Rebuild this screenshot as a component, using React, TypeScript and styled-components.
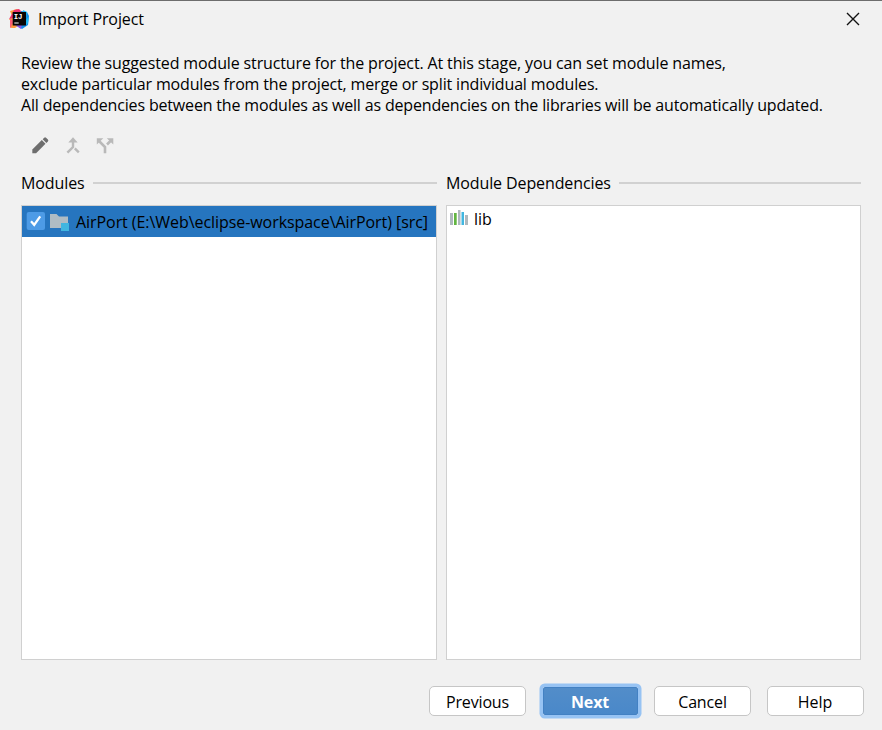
import React from "react";
import styled, { createGlobalStyle } from "styled-components";

const GlobalStyle = createGlobalStyle`
  * { box-sizing: border-box; }
  body { margin: 0; background: #f1f1f1; }
`;

const Dialog = styled.main`
  width: 882px;
  height: 730px;
  display: flex;
  flex-direction: column;
  border-top: 1px solid #6d6d6d;
  background: #f1f1f1;
  color: #000;
  font: 16px/21px "Open Sans", "Noto Sans", sans-serif;
  overflow: hidden;
`;

const TitleBar = styled.header`
  height: 36px;
  display: flex;
  align-items: center;
  padding: 0 22px 0 9px;
`;

const Label = styled.span<{ $tracking?: number }>`
  white-space: pre;
  letter-spacing: ${(p) => p.$tracking ?? 0}px;
`;

const Title = styled(Label)`
  flex: 1;
  margin: 1px 0 0 9px;
`;

const CloseButton = styled.button`
  display: flex;
  padding: 0;
  border: 0;
  background: none;
`;

const Description = styled.section`
  height: 63px;
  margin: 16px 21px 0;
  display: flex;
  flex-direction: column;
`;

const Toolbar = styled.div`
  display: flex;
  gap: 12px;
  margin: 19px 0 0 30px;
  height: 20px;
`;

const Panels = styled.div`
  display: grid;
  grid-template-columns: 416px 415px;
  gap: 9px;
  margin: 18px 0 0 21px;
`;

const Panel = styled.section`
  display: flex;
  flex-direction: column;
`;

const Heading = styled.h2`
  display: flex;
  align-items: center;
  gap: 8px;
  height: 21px;
  margin: 0 0 11px;
  font: inherit;
  &::after {
    content: "";
    flex: 1;
    height: 2px;
    margin-bottom: 2px;
    background: #d1d1d1;
  }
`;

const List = styled.div`
  height: 455px;
  border: 1px solid #d0d0d0;
  background: #fff;
`;

const ModuleRow = styled.div`
  height: 31px;
  display: flex;
  align-items: center;
  padding-left: 4px;
  background: #2675bf;
`;

const RowIcon = styled.span`
  display: flex;
  margin-bottom: 1px;
`;

const FolderSlot = styled(RowIcon)`
  margin: 0 0 0 3px;
`;

const ModuleName = styled(Label)`
  margin: 2px 0 0 7px;
`;

const LibraryRow = styled.div`
  height: 26px;
  display: flex;
  align-items: center;
  gap: 6px;
  padding-left: 3px;
`;

const LibraryGlyph = styled.span`
  display: flex;
  margin-bottom: 2px;
`;

const Footer = styled.footer`
  display: flex;
  align-items: center;
  justify-content: flex-end;
  gap: 15.5px;
  height: 36px;
  margin-top: 23px;
  padding: 0 18.5px 1px 0;
`;

const Button = styled.button`
  width: 97px;
  height: 30px;
  padding: 3px 0 0;
  border: 1px solid #c6c6c6;
  border-radius: 5px;
  background: #fff;
  color: #000;
  font: inherit;
`;

const PrimaryButton = styled(Button)`
  width: 95px;
  height: 28px;
  margin: 0 1px;
  border: 1px solid #4381c3;
  border-radius: 2px;
  background: linear-gradient(#528dc9, #4a88c9);
  box-shadow: 0 0 0 3.5px #97c3f3;
  color: #fff;
  font-weight: 700;
`;

function AppIcon() {
  return (
    <svg width="20" height="20" viewBox="0 0 20 20">
      <path d="M1 2 8 0l5 3-3 8H0l3-4z" fill="#fc9b3a" />
      <path d="M5 1 10 0l3 3-9 6-4 1 3-5z" fill="#ef326f" />
      <path d="m12 2 6 1 2 4-1 9-6 4-5-3z" fill="#148be8" />
      <path d="m14 1 4 2-1 8 3-4-1 7-3 3z" fill="#1bb8f3" />
      <path d="m1 10 7 3-3 4-4 2z" fill="#fe5c71" />
      <path d="m2 19 1-4 6 2-3 2z" fill="#ff9a3c" />
      <path d="m6 16 7-1-1 5z" fill="#8754e8" />
      <path fill="#090404" d="M3.7 3H17v13.5H3.7z" />
      <path d="M5.3 14h4.4" stroke="#fff" strokeWidth="1" />
      <text x="4.7" y="10" fill="#fff" fontFamily="Liberation Mono, monospace" fontSize="7.4" fontWeight="700">IJ</text>
    </svg>
  );
}

function CloseIcon() {
  return (
    <svg width="14" height="14" viewBox="0 0 14 14">
      <path d="m1 1 12 12M13 1 1 13" stroke="#111" strokeWidth="1.4" />
    </svg>
  );
}

function PencilIcon() {
  return (
    <svg width="20" height="20" viewBox="0 0 20 20">
      <path d="m2.3 14.5 9.5-9.4 3.7 3.7L6.1 18.2H2.3z" fill="#6e6e6e" />
      <path d="m12.7 4.2 1.5-1.5q.9-.9 1.8 0l1.9 1.9q.9.9 0 1.8l-1.5 1.5z" fill="#6e6e6e" />
    </svg>
  );
}

function MergeIcon() {
  return (
    <svg width="20" height="20" viewBox="0 0 20 20">
      <path d="M11 6v6l-5.6 5.6M12.8 13.4l4 4" fill="none" stroke="#b9b9b9" strokeWidth="2.4" />
      <path d="m11 2.3 4.7 5.2H6.3z" fill="#b9b9b9" />
    </svg>
  );
}

function SplitIcon() {
  return (
    <svg width="20" height="20" viewBox="0 0 20 20">
      <path d="M11 18.3V12L5 6M13 9.5l4-4" fill="none" stroke="#b9b9b9" strokeWidth="2.6" />
      <path d="M2.8 3.2h6.5l-6.5 6.3zM12.8 3.2h6.5v6.3z" fill="#b9b9b9" />
    </svg>
  );
}

function CheckIcon() {
  return (
    <svg width="20" height="20" viewBox="0 0 20 20">
      <rect x=".7" y="1" width="18.3" height="18" rx="2" fill="#4d9be6" />
      <path d="m5 10.3 3.2 3.5 6-8.5" fill="none" stroke="#fff" strokeWidth="2.3" />
    </svg>
  );
}

function ModuleIcon() {
  return (
    <svg width="20" height="20" viewBox="0 0 20 20">
      <path d="M1 2h6.5L10 4.5h9V11h-7v5H1z" fill="#afbcc4" />
      <path d="M12 11h8v8h-8z" fill="#40b6e0" />
    </svg>
  );
}

function LibraryIcon() {
  return (
    <svg width="18" height="16" viewBox="0 0 18 16">
      <path d="M0 3h3v12H0zM8 0h2.5v15H8zM15 5h3v10h-3z" fill="#afb8be" />
      <path d="M4 3h2.7v12H4z" fill="#62b543" />
      <path d="M11.5 2H14v13h-2.5z" fill="#40b6e0" />
    </svg>
  );
}

export default function App() {
  return (
    <Dialog>
      <GlobalStyle />
      <TitleBar>
        <AppIcon />
        <Title $tracking={-0.1}>Import Project</Title>
        <CloseButton aria-label="Close"><CloseIcon /></CloseButton>
      </TitleBar>
      <Description>
        <Label $tracking={-0.135}>Review the suggested module structure for the project. At this stage, you can set module names,</Label>
        <Label $tracking={-0.155}>exclude particular modules from the project, merge or split individual modules.</Label>
        <Label $tracking={-0.17}>All dependencies between the modules as well as dependencies on the libraries will be automatically updated.</Label>
      </Description>
      <Toolbar>
        <PencilIcon />
        <MergeIcon />
        <SplitIcon />
      </Toolbar>
      <Panels>
        <Panel>
          <Heading><Label $tracking={-0.1}>Modules</Label></Heading>
          <List>
            <ModuleRow>
              <RowIcon><CheckIcon /></RowIcon>
              <FolderSlot><ModuleIcon /></FolderSlot>
              <ModuleName $tracking={-0.06}>AirPort (E:\Web\eclipse-workspace\AirPort) [src]</ModuleName>
            </ModuleRow>
          </List>
        </Panel>
        <Panel>
          <Heading><Label $tracking={-0.11}>Module Dependencies</Label></Heading>
          <List>
            <LibraryRow><LibraryGlyph><LibraryIcon /></LibraryGlyph><Label>lib</Label></LibraryRow>
          </List>
        </Panel>
      </Panels>
      <Footer>
        <Button><Label $tracking={-0.15}>Previous</Label></Button>
        <PrimaryButton><Label $tracking={-0.15}>Next</Label></PrimaryButton>
        <Button><Label $tracking={-0.15}>Cancel</Label></Button>
        <Button><Label>Help</Label></Button>
      </Footer>
    </Dialog>
  );
}
